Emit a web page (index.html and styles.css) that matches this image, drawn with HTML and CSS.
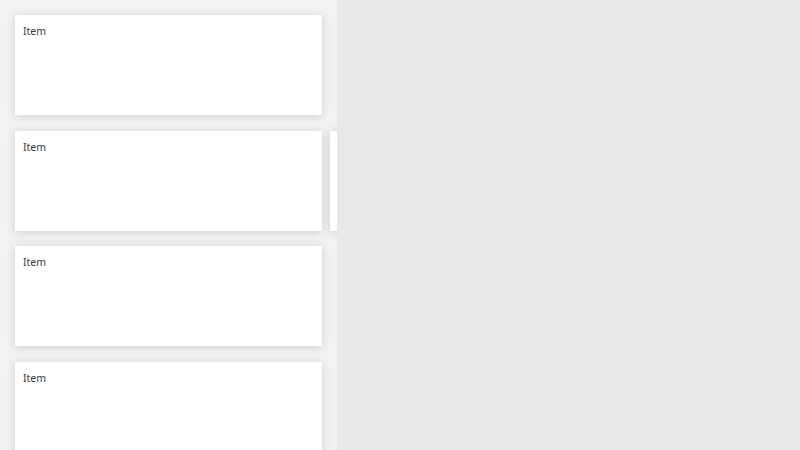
FILE: index.html
```html
<!DOCTYPE html>
<html>
<head>
<meta charset="utf-8">
<link rel="stylesheet" href="styles.css">
</head>
<body>
<div class="app">
  <div class="panel">
    <div class="list">
      <div class="row"><div class="card">Item</div></div>
      <div class="row"><div class="card">Item</div><div class="card"></div></div>
      <div class="row"><div class="card">Item</div></div>
      <div class="row"><div class="card">Item</div></div>
    </div>
  </div>
  <div class="main"></div>
</div>
</body>
</html>
```
FILE: styles.css
```css
html, body {
  margin: 0;
  padding: 0;
  height: 100%;
  overflow: hidden;
}
body {
  font-family: "Noto Sans", "Open Sans", sans-serif;
  background: #e8e8e8;
}
.app {
  display: flex;
  height: 450px;
}
.panel {
  width: 337px;
  flex: none;
  background: #f2f2f2;
  overflow: hidden;
}
.main {
  flex: 1;
  background: #e8e8e8;
}
.list {
  display: flex;
  flex-direction: column;
  gap: 15.5px;
  padding: 15px;
}
.row {
  display: flex;
  gap: 8px;
}
.card {
  flex: none;
  width: 307px;
  height: 100px;
  box-sizing: border-box;
  padding: 9px 8px;
  background: #fff;
  box-shadow: 0 1px 9px rgba(0, 0, 0, 0.15);
  font-size: 10.5px;
  line-height: 15px;
  color: #3a3a3a;
}
```
